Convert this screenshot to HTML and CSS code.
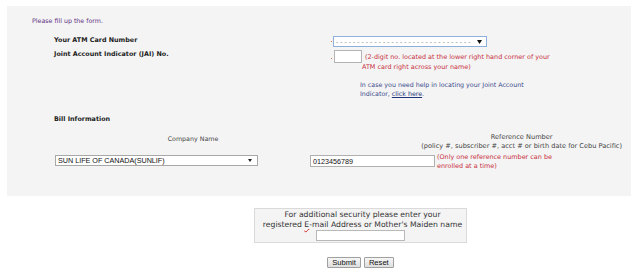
FILE: index.html
```html
<!DOCTYPE html>
<html>
<head>
<meta charset="utf-8">
<link rel="stylesheet" href="styles.css">
</head>
<body>
<div class="page">
  <div class="panel">
    <p class="intro">Please fill up the form.</p>
    <div class="form">
      <div class="row row-atm">
        <span class="label">Your ATM Card Number</span>
        <span class="req"></span>
        <span class="select-wrap atm">
          <select class="sel sel-atm"><option>--------------------------------</option></select>
          <svg class="arrow" width="5" height="4" viewBox="0 0 5 4"><path d="M0 0H5L2.5 4Z" fill="#111"/></svg>
        </span>
      </div>
      <div class="row row-jai">
        <span class="label">Joint Account Indicator (JAI) No.</span>
        <span class="req req-jai"></span>
        <input class="jai" type="text">
        <span class="note note-jai">(2-digit no. located at the lower right hand corner of your<br>ATM card right across your name)</span>
      </div>
      <p class="help">In case you need help in locating your Joint Account<br>Indicator, <a href="#" class="link">click here</a>.</p>
      <p class="section">Bill Information</p>
      <div class="heads">
        <div class="head-company">Company Name</div>
        <div class="head-ref"><span class="head-ref-text">Reference Number<br>(policy #, subscriber #, acct # or birth date for Cebu Pacific)</span></div>
      </div>
      <div class="bill-row">
        <span class="select-wrap company">
          <select class="sel sel-company"><option>SUN LIFE OF CANADA(SUNLIF)</option></select>
          <svg class="arrow arrow-small" width="4" height="3" viewBox="0 0 4 3"><path d="M0 0H4L2 3Z" fill="#222"/></svg>
        </span>
        <input class="ref" type="text" value="0123456789">
        <span class="note note-ref">(Only one reference number can be<br>enrolled at a time)</span>
      </div>
    </div>
  </div>
  <div class="security">
    <p class="security-text">For additional security please enter your<br>registered <span class="e">E</span>-mail Address or Mother's Maiden name</p>
    <input class="secret" type="text">
  </div>
  <div class="buttons">
    <button class="btn" type="button">Submit</button>
    <button class="btn" type="button">Reset</button>
  </div>
</div>
</body>
</html>
```
FILE: styles.css
```css
html, body {
  margin: 0;
  padding: 0;
  background: #ffffff;
}
.page {
  padding: 6px 12px 0 7px;
  font-family: "DejaVu Sans", Verdana, sans-serif;
  font-size: 6.3px;
  color: #222;
}
.panel {
  width: 624px;
  height: 190px;
  box-sizing: border-box;
  background: #f4f4f4;
  padding: 11px 9px 0 25px;
}
.intro {
  margin: 0;
  line-height: 8px;
  color: #5e2f83;
}
.form {
  margin-left: 22px;
}
.row {
  display: flex;
  align-items: flex-start;
}
.row-atm {
  margin-top: 11px;
  height: 11px;
}
.row-atm .label {
  line-height: 9px;
}
.label {
  width: 277px;
  font-weight: bold;
  font-size: 6.4px;
  color: #1c1c1c;
  line-height: 8px;
  white-space: nowrap;
}
.req {
  width: 2px;
  position: relative;
}
.req::before {
  content: "";
  position: absolute;
  left: 0;
  top: 5px;
  width: 1px;
  height: 1px;
  background: #e0704e;
}
.req-jai {
  width: 3px;
}
.req-jai::before {
  top: 8px;
}
.select-wrap {
  position: relative;
  display: inline-block;
}
.sel {
  -webkit-appearance: none;
  appearance: none;
  margin: 0;
  box-sizing: border-box;
  background: #fff;
  outline: none;
  border-radius: 0;
  display: block;
}
.sel-atm {
  width: 154px;
  height: 11px;
  border: 1px solid #8fb0dc;
  padding: 0 0 0 2px;
  font-family: "DejaVu Sans", sans-serif;
  font-size: 6px;
  letter-spacing: 2.1px;
  line-height: 9px;
  color: #666;
}
.arrow {
  position: absolute;
  right: 5px;
  top: 4px;
  display: block;
}
.arrow-small {
  right: 6px;
  top: 4px;
}
.row-jai {
  margin-top: 3px;
}
.jai {
  width: 28px;
  height: 13px;
  margin: 0;
  padding: 0;
  box-sizing: border-box;
  border: 1px solid #b4b4b4;
  border-radius: 0;
  background: #fff;
}
.note {
  color: #c8303f;
  line-height: 10px;
  white-space: nowrap;
  font-size: 6.45px;
}
.note-jai {
  margin-top: 2px;
  text-indent: 3px;
}
.help {
  margin: 8px 0 0 306px;
  line-height: 9px;
  color: #3a4a8c;
}
.link {
  color: #22337a;
  text-decoration: underline;
}
.section {
  margin: 17px 0 0 0;
  font-weight: bold;
  font-size: 6.4px;
  line-height: 8px;
  color: #1c1c1c;
}
.heads {
  display: flex;
  margin-top: 10px;
  line-height: 9px;
  color: #444;
}
.head-company {
  width: 278px;
  text-align: center;
  padding-top: 1px;
}
.head-ref {
  flex: 1;
  text-align: right;
}
.head-ref-text {
  display: inline-block;
  text-align: center;
  font-size: 6.6px;
}
.bill-row {
  display: flex;
  align-items: flex-start;
  margin-top: 3px;
}
.company {
  margin-left: 1px;
  margin-top: 1px;
}
.sel-company {
  width: 203px;
  height: 11px;
  border: 1px solid #a8a8a8;
  padding: 0 0 0 2px;
  font-family: "Liberation Sans", Arial, sans-serif;
  font-size: 7.2px;
  line-height: 9px;
  color: #111;
}
.ref {
  margin: 1px 0 0 52px;
  width: 125px;
  height: 12px;
  padding: 0 0 0 2px;
  box-sizing: border-box;
  border: 1px solid #b0b0b0;
  border-radius: 0;
  background: #fff;
  font-family: "Liberation Sans", Arial, sans-serif;
  font-size: 7.2px;
  color: #111;
  outline: none;
}
.note-ref {
  margin-left: 2px;
  margin-top: -1px;
  line-height: 9px;
}
.security {
  margin: 12px 0 0 247px;
  width: 213px;
  height: 35px;
  box-sizing: border-box;
  border: 1px solid #dadada;
  background: #f4f4f4;
  text-align: center;
}
.security-text {
  margin: 1px -4px 0 0;
  font-size: 7.7px;
  line-height: 10px;
  color: #333;
  white-space: nowrap;
}
.e {
  text-decoration: underline wavy #d02020;
  text-decoration-thickness: 1px;
}
.secret {
  display: block;
  margin: 0 0 0 61px;
  width: 89px;
  height: 11px;
  padding: 0;
  box-sizing: border-box;
  border: 1px solid #b8b8b8;
  border-radius: 0;
  background: #fff;
}
.buttons {
  margin: 14px 0 0 247px;
  width: 213px;
  display: flex;
  justify-content: center;
  gap: 3px;
}
.btn {
  margin: 0;
  height: 11px;
  padding: 0 4px;
  box-sizing: border-box;
  border: 1px solid #a0a0a0;
  border-radius: 1px;
  background: linear-gradient(#f6f6f6, #dedede);
  font-family: "Liberation Sans", Arial, sans-serif;
  font-size: 7.6px;
  line-height: 9px;
  color: #111;
}
```
